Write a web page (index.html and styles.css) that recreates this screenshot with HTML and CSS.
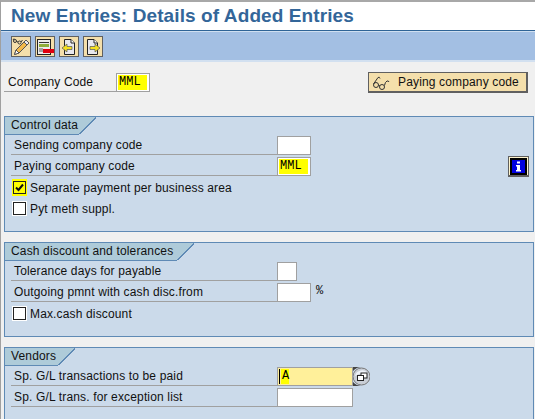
FILE: index.html
```html
<!DOCTYPE html>
<html lang="en">
<head>
<meta charset="utf-8">
<title>New Entries: Details of Added Entries</title>
<link rel="stylesheet" href="styles.css">
</head>
<body>
<div class="page">
  <header class="title-bar"><h1>New Entries: Details of Added Entries</h1></header>
  <nav class="toolbar">
    <button class="tool"><svg width="18" height="19" viewBox="0 0 18 19"><g fill="none" stroke="#333"><circle cx="3" cy="4" r="1.500"/><circle cx="7.500" cy="5.500" r="1.500"/><path d="M1 3 L2 1.500 M4.500 4.500 L6 5 M9 5 L10.500 3"/></g><path d="M14 3 L17 6 L7 16 L2.500 17.500 L4 13 Z" fill="#f2b84a" stroke="#555"/><path d="M14 3 L17 6 L15 8 L12 5 Z" fill="#e8e8f0" stroke="#555"/><path d="M2.500 17.500 L4 13 L7 16 Z" fill="#fff" stroke="#555"/></svg></button>
    <button class="tool"><svg width="18" height="18" viewBox="0 0 18 18"><rect x="1.500" y="1.500" width="13" height="15" fill="#ececec" stroke="#222"/><path d="M3 4.500 H13" stroke="#333"/><rect x="3" y="6" width="10" height="3" fill="#8fae3c"/><path d="M3 11 H7 M3 13 H7" stroke="#555"/><rect x="7" y="11" width="11" height="4" fill="#e00010"/></svg></button>
    <button class="tool"><svg width="18" height="18" viewBox="0 0 18 18"><path d="M4.500 1.500 H11 L14.500 5 V16.500 H4.500 Z" fill="#e8e8ee" stroke="#222"/><path d="M11 1.500 V5 H14.500" fill="#fff" stroke="#222"/><path d="M2 10 L7 6 V8.500 H12 V11.500 H7 V14 Z" fill="#f5e020" stroke="#555" stroke-width=".7"/></svg></button>
    <button class="tool"><svg width="18" height="18" viewBox="0 0 18 18"><path d="M3.500 1.500 H10 L13.500 5 V16.500 H3.500 Z" fill="#e8e8ee" stroke="#222"/><path d="M10 1.500 V5 H13.500" fill="#fff" stroke="#222"/><path d="M16 10 L11 6 V8.500 H6 V11.500 H11 V14 Z" fill="#f5e020" stroke="#555" stroke-width=".7"/></svg></button>
  </nav>
  <main class="content">
    <div class="company-row">
      <span class="label company-label">Company Code</span>
      <span class="field w-company"><span class="mono hl">MML</span></span>
      <button class="paying-btn">
        <svg width="18" height="15" viewBox="0 0 18 15"><g fill="none" stroke="#333"><circle cx="4" cy="10" r="2.500"/><circle cx="10" cy="12" r="2.500"/><path d="M6.500 10 L7.800 10.800 M1.500 9 L6 2.500 Q7.500 1.500 8 3.500 M12.500 10.500 Q13 7 15 6 Q16.500 5.500 17 7"/></g></svg>
        <span>Paying company code</span>
      </button>
    </div>

    <section class="panel panel-control">
      <div class="tab tab-control"><span>Control data</span></div>
      <div class="row"><span class="label">Sending company code</span><span class="field w-34"></span></div>
      <div class="row">
        <span class="label">Paying company code</span><span class="field w-34"><span class="mono hl">MML</span></span>
        <button class="info-btn"><svg width="17" height="17" viewBox="0 0 17 17"><rect x="1" y="1" width="15" height="15" fill="#0000e0" stroke="#000" stroke-width="2"/><path d="M7 3.500 H10 V5.500 H7 Z M6 7 H10 V12 H11 V13.500 H6 V12 H7 V8.500 H6 Z" fill="#fff"/></svg></button>
      </div>
      <label class="check-row"><span class="check-wrap"><span class="check"><svg width="11" height="11" viewBox="0 0 11 11"><path d="M2 5.500 L4.500 8 L9 2.500" fill="none" stroke="#111" stroke-width="2"/></svg></span></span><span class="check-label">Separate payment per business area</span></label>
      <label class="check-row"><span class="check-plain"><span class="check"></span></span><span class="check-label">Pyt meth suppl.</span></label>
    </section>

    <section class="panel panel-cash">
      <div class="tab tab-cash"><span>Cash discount and tolerances</span></div>
      <div class="row"><span class="label">Tolerance days for payable</span><span class="field w-20"></span></div>
      <div class="row"><span class="label">Outgoing pmnt with cash disc.from</span><span class="field w-34"></span><span class="unit">%</span></div>
      <label class="check-row"><span class="check-plain"><span class="check"></span></span><span class="check-label">Max.cash discount</span></label>
    </section>

    <section class="panel panel-vendors">
      <div class="tab tab-vendors"><span>Vendors</span></div>
      <div class="row">
        <span class="label">Sp. G/L transactions to be paid</span>
        <span class="field w-76 active"><span class="cursor"></span><span class="mono hl">A</span></span>
        <span class="f4"><svg width="17" height="19" viewBox="0 0 17 19"><path d="M0 0 H8 A9.500 9.500 0 0 0 8 19 H0 Z" fill="#444"/><circle cx="8.500" cy="9.500" r="8.500" fill="#c9ced6" stroke="#777"/><path d="M2 9 A7 7 0 0 1 15 7 Q8 5 2 9 Z" fill="#eef2f8"/><rect x="8" y="6" width="6" height="5" fill="#fff" stroke="#222"/><rect x="4.500" y="8.500" width="6" height="5" fill="#fff" stroke="#222"/></svg></span>
      </div>
      <div class="row"><span class="label">Sp. G/L trans. for exception list</span><span class="field w-76"></span></div>
    </section>
  </main>
</div>
</body>
</html>
```
FILE: styles.css
```css
* { box-sizing: border-box; }
html, body { margin: 0; padding: 0; }
body {
  width: 535px;
  height: 419px;
  overflow: hidden;
  background: #f0f0f0;
  font-family: "Liberation Sans", Arial, sans-serif;
  font-size: 12px;
  color: #111;
}
.page {
  height: 419px;
  border-left: 1px solid #a0a0a0;
  border-top: 2px solid #a8a8a8;
  display: flex;
  flex-direction: column;
  overflow: hidden;
}
.title-bar {
  flex: none;
  height: 29px;
  background: #fff;
  border-bottom: 1px solid #2f6496;
  padding-left: 10px;
  display: flex;
  align-items: center;
}
h1 {
  margin: 0;
  font-size: 19px;
  font-weight: bold;
  color: #336699;
  letter-spacing: .1px;
  white-space: nowrap;
}
.toolbar {
  flex: none;
  height: 31px;
  background: #a3bfe3;
  border-top: 1px solid #d0dff0;
  border-bottom: 2px solid #d2e0f0;
  padding: 4px 0 0 10px;
  display: flex;
  gap: 4px;
  align-items: flex-start;
}
.tool {
  width: 20px;
  height: 21px;
  padding: 0;
  background: #f4dfab;
  border: 1px solid #606060;
  display: flex;
  align-items: center;
  justify-content: center;
}
.content {
  flex: none;
  padding: 11px 1px 0 3px;
  display: flex;
  flex-direction: column;
}
.company-row {
  display: flex;
  align-items: flex-start;
  height: 32px;
  margin-bottom: 11px;
}
.label {
  width: 266px;
  height: 19px;
  border-bottom: 1px solid #a0a0a0;
  padding: 1px 0 0 3px;
  line-height: 17px;
  letter-spacing: .15px;
  white-space: nowrap;
}
.company-label { width: 112px; padding-left: 4px; }
.field {
  height: 19px;
  background: #fff;
  border: 1px solid #a0a0a0;
  padding: 1px;
  display: flex;
  align-items: flex-start;
}
.w-company { width: 34px; }
.w-34 { width: 34px; }
.w-20 { width: 20px; }
.w-76 { width: 76px; }
.mono {
  font-family: "Liberation Mono", monospace;
  font-size: 12px;
  line-height: 15px;
  color: #000;
  padding: 0 1px;
}
.hl { background: #ffff00; padding-right: 6px; }
.active { background: #fff09a; }
.active .hl { padding-right: 0; }
.cursor { width: 1px; height: 15px; background: #000; margin-right: 1px; }
.paying-btn {
  margin-left: 218px;
  width: 160px;
  height: 21px;
  margin-top: -1px;
  padding: 0 0 0 3px;
  background: #f4dfab;
  border: 1px solid #606060;
  border-right-width: 2px;
  border-bottom-width: 2px;
  display: flex;
  align-items: center;
  gap: 8px;
  font: 12px "Liberation Sans", Arial, sans-serif;
  letter-spacing: .15px;
  color: #111;
}
.panel {
  background: #cbdaea;
  border: 1px solid #5f8ab5;
  margin-bottom: 10px;
  padding-left: 6px;
}
.panel-control { height: 116px; }
.panel-cash { height: 95px; }
.panel-vendors { height: 90px; }
.tab {
  height: 18px;
  margin: 0 0 1px -6px;
  background: #aecbd9;
  border-bottom: 1px solid #5f8ab5;
  padding-left: 6px;
  line-height: 16px;
  letter-spacing: .15px;
  white-space: nowrap;
  position: relative;
}
.tab::after {
  content: "";
  position: absolute;
  top: 0;
  right: -17px;
  width: 17px;
  height: 17px;
  background: linear-gradient(to bottom right, #aecbd9 49%, #5f8ab5 49%, #5f8ab5 53%, transparent 53%);
}
.tab-control { width: 74px; }
.tab-cash { width: 172px; }
.tab-vendors { width: 53px; }
.row {
  display: flex;
  align-items: flex-start;
  height: 19px;
  margin-bottom: 2px;
}
.check-row {
  display: flex;
  align-items: center;
  height: 19px;
  margin-bottom: 2px;
  padding-left: 1px;
}
.check-wrap, .check-plain {
  width: 15px;
  height: 15px;
  display: flex;
  align-items: center;
  justify-content: center;
  margin-right: 3px;
  flex: none;
}
.check-wrap { background: #ffff00; height: 17px; }
.check-plain { background: #fff; }
.check {
  width: 13px;
  height: 13px;
  background: #fff;
  border: 1px solid #222;
  display: flex;
  align-items: center;
  justify-content: center;
}
.check-wrap .check { background: #ffff00; }
.check-label { letter-spacing: .15px; white-space: nowrap; }
.unit {
  margin-left: 5px;
  font-family: "Liberation Mono", monospace;
  font-size: 12px;
  line-height: 17px;
}
.info-btn {
  margin-left: 197px;
  margin-top: -1px;
  width: 21px;
  height: 21px;
  padding: 0;
  background: #fdf3cc;
  border: 1px solid #606060;
  border-bottom-width: 2px;
  display: flex;
  align-items: center;
  justify-content: center;
}
.f4 { display: block; height: 19px; }
```
